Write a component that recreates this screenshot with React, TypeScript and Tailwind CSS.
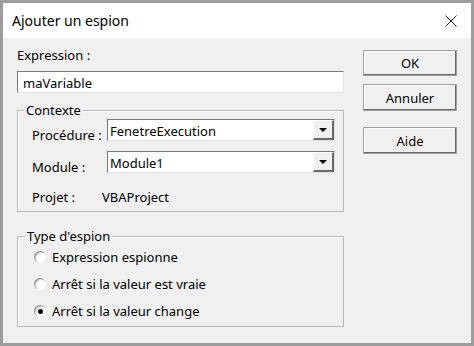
import React from "react";

function Select({ value }: { value: string }) {
  return (
    <div className="flex h-[22px] w-[228px] bg-white border-t border-l border-[#7a7a7a] border-b border-r border-b-[#e3e3e3] border-r-[#e3e3e3]">
      <div className="flex-1 pl-[2px] pt-[3px] leading-[16px]">{value}</div>
      <div className="w-[21px] h-full flex items-center justify-center bg-[#f0f0f0] border-t border-l border-white border-r-2 border-b-2 border-r-[#696969] border-b-[#696969]">
        <svg width="8" height="4" viewBox="0 0 8 4">
          <path d="M0 0H8L4 4Z" fill="#000" />
        </svg>
      </div>
    </div>
  );
}

function Radio({ label, checked }: { label: string; checked?: boolean }) {
  return (
    <div className="flex items-center h-[16px] leading-[16px]">
      <div className="w-[12px] h-[12px] rounded-full bg-white flex items-center justify-center shadow-[inset_1px_1px_0_#9a9a9a,inset_2px_2px_1px_#cfcfcf]">
        {checked && <div className="w-[5px] h-[5px] rounded-full bg-black" />}
      </div>
      <span className="ml-[6px]">{label}</span>
    </div>
  );
}

function Button({ children, className }: { children: React.ReactNode; className?: string }) {
  return (
    <div
      className={
        "w-[94px] flex items-center justify-center bg-[#f0f0f0] border border-[#a0a0a0] shadow-[inset_-1px_-1px_0_#696969,inset_1px_1px_0_#ffffff] leading-[16px] " +
        (className || "")
      }
    >
      {children}
    </div>
  );
}

export default function App() {
  return (
    <div className="w-[474px] h-[346px] border-[3px] border-[#9c9c9c] bg-[#f0f0f0] flex flex-col font-['Noto_Sans',sans-serif] text-[13px] text-black overflow-hidden">
      {/* title bar */}
      <div className="h-[35px] shrink-0 bg-white flex items-center justify-between pl-[9px] pr-[14px]">
        <span className="text-[14px]">Ajouter un espion</span>
        <svg width="12" height="12" viewBox="0 0 12 12">
          <path d="M0.5 0.5L11.5 11.5M11.5 0.5L0.5 11.5" stroke="#222" strokeWidth="1" />
        </svg>
      </div>

      <div className="flex flex-1 pl-[14px] pt-[9px]">
        {/* left column */}
        <div className="w-[327px] flex flex-col">
          <div className="h-[16px] leading-[16px]">Expression :</div>
          <div className="mt-[8px] h-[22px] bg-white border-t border-l border-[#7a7a7a] border-b border-r border-b-[#e3e3e3] border-r-[#e3e3e3] pl-[5px] pt-[3px] leading-[16px]">
            maVariable
          </div>

          <fieldset className="mt-[9px] border border-[#b9b9b9] shadow-[inset_1px_1px_0_#ffffff] pl-[14px] pr-[7px] pt-[1px] pb-[6px]">
            <legend className="ml-[-8px] px-[2px] leading-[16px]">Contexte</legend>
            <div className="flex h-[22px]">
              <span className="w-[75px] pt-[8px] leading-[16px]">Procédure :</span>
              <Select value="FenetreExecution" />
            </div>
            <div className="flex h-[22px] mt-[10px]">
              <span className="w-[75px] pt-[8px] leading-[16px]">Module :</span>
              <Select value="Module1" />
            </div>
            <div className="flex h-[16px] mt-[16px] leading-[16px]">
              <span className="w-[70px]">Projet :</span>
              <span>VBAProject</span>
            </div>
          </fieldset>

          <fieldset className="mt-[16px] border border-[#b9b9b9] shadow-[inset_1px_1px_0_#ffffff] pl-[16px] pt-[5px] pb-[7px] flex flex-col gap-[11px]">
            <legend className="ml-[-9px] px-[2px] leading-[16px]">Type d'espion</legend>
            <Radio label="Expression espionne" />
            <Radio label="Arrêt si la valeur est vraie" />
            <Radio label="Arrêt si la valeur change" checked />
          </fieldset>
        </div>

        {/* buttons */}
        <div className="ml-[19px] flex flex-col pt-[3px]">
          <Button className="h-[26px]">OK</Button>
          <Button className="h-[27px] mt-[8px]">Annuler</Button>
          <Button className="h-[27px] mt-[16px]">Aide</Button>
        </div>
      </div>
    </div>
  );
}
